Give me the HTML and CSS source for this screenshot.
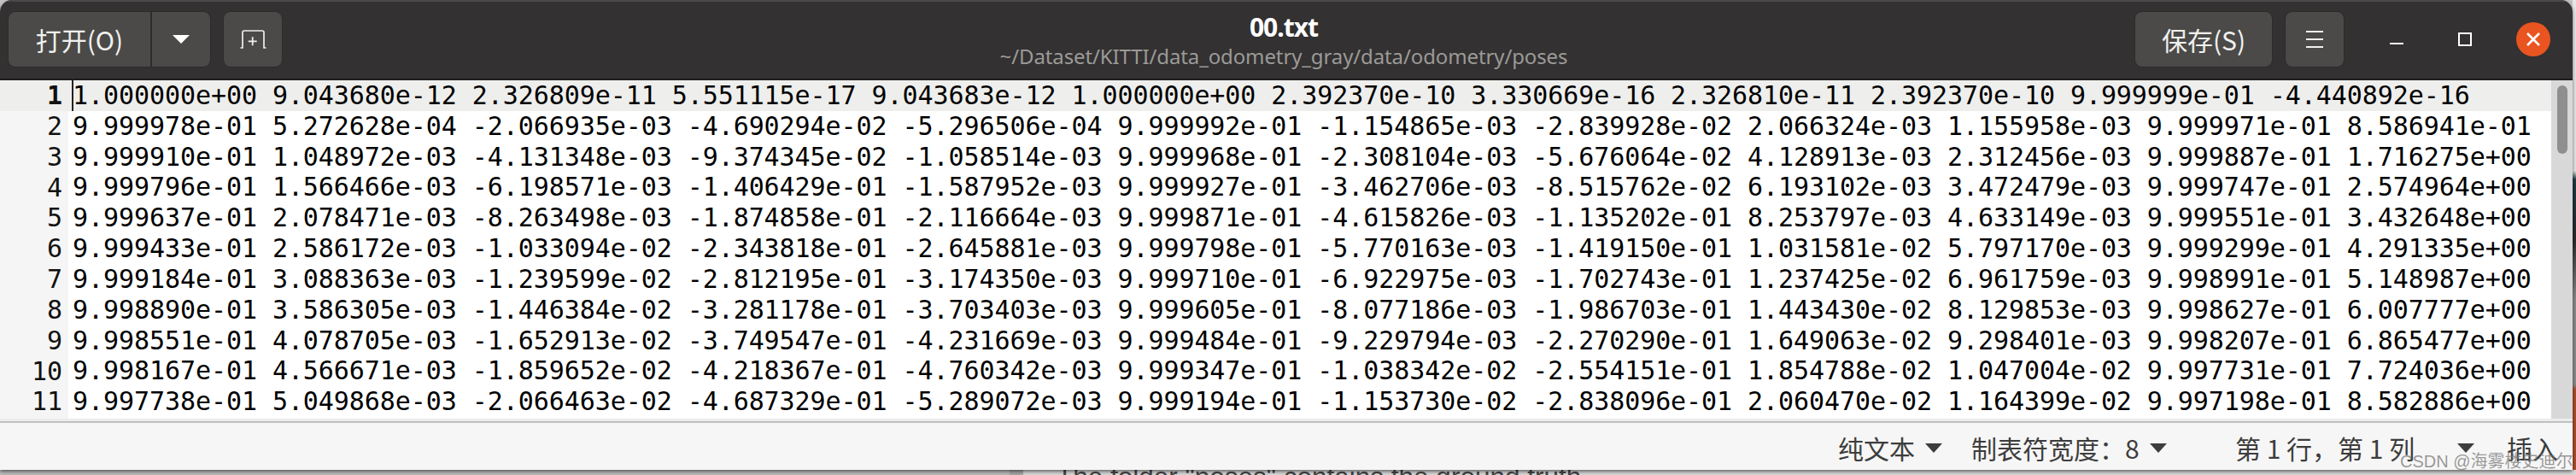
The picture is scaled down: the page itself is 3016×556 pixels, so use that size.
FILE: index.html
```html
<!DOCTYPE html>
<html lang="zh">
<head>
<meta charset="utf-8">
<title>00.txt</title>
<link rel="stylesheet" href="styles.css">
</head>
<body>
<div class="backdrop"><span class="backdrop-text">The folder "poses" contains the ground truth.</span></div>
<div class="edge"></div>
<div class="window">
  <header class="titlebar">
    <div class="group-left">
      <div class="split">
        <button class="btn btn-open">打开(O)</button>
        <button class="btn btn-drop"><svg width="20" height="10" viewBox="0 0 20 10"><path d="M0 0h20L10 10z" fill="#fff"/></svg></button>
      </div>
      <button class="btn btn-new"><svg width="34" height="26" viewBox="0 0 34 26"><path d="M2.500 23H5V5Q5 3 7 3H28Q30 3 30 5V23H32.500" fill="none" stroke="#eeeeec" stroke-width="1.700"/><path d="M11.700 15.300h10M16.700 10.300v10" stroke="#eeeeec" stroke-width="1.800"/></svg></button>
    </div>
    <div class="titles">
      <div class="title">00.txt</div>
      <div class="subtitle">~/Dataset/KITTI/data_odometry_gray/data/odometry/poses</div>
    </div>
    <div class="group-right">
      <button class="btn btn-save">保存(S)</button>
      <button class="btn btn-menu"><svg width="20" height="20" viewBox="0 0 20 20"><path d="M0 1h20M0 10h20M0 19h20" stroke="#eeeeec" stroke-width="2"/></svg></button>
      <div class="wm">
        <span class="wm-slot"><svg width="16" height="16" viewBox="0 0 16 16"><path d="M0 13h16" stroke="#fff" stroke-width="2"/></svg></span>
        <span class="wm-slot"><svg width="16" height="16" viewBox="0 0 16 16"><rect x="1" y="1" width="14" height="14" fill="none" stroke="#fff" stroke-width="2"/></svg></span>
        <span class="close"><svg width="18" height="18" viewBox="0 0 18 18"><path d="M2 2l14 14M16 2L2 16" stroke="#fff" stroke-width="2.600"/></svg></span>
      </div>
    </div>
  </header>
  <main class="editor">
    <div class="gutter">
      <div class="ln current">1</div><div class="ln">2</div><div class="ln">3</div><div class="ln">4</div><div class="ln">5</div><div class="ln">6</div><div class="ln">7</div><div class="ln">8</div><div class="ln">9</div><div class="ln">10</div><div class="ln">11</div>
    </div>
    <div class="text">
      <div class="line current"><span class="caret"></span>1.000000e+00 9.043680e-12 2.326809e-11 5.551115e-17 9.043683e-12 1.000000e+00 2.392370e-10 3.330669e-16 2.326810e-11 2.392370e-10 9.999999e-01 -4.440892e-16</div>
      <div class="line">9.999978e-01 5.272628e-04 -2.066935e-03 -4.690294e-02 -5.296506e-04 9.999992e-01 -1.154865e-03 -2.839928e-02 2.066324e-03 1.155958e-03 9.999971e-01 8.586941e-01</div>
      <div class="line">9.999910e-01 1.048972e-03 -4.131348e-03 -9.374345e-02 -1.058514e-03 9.999968e-01 -2.308104e-03 -5.676064e-02 4.128913e-03 2.312456e-03 9.999887e-01 1.716275e+00</div>
      <div class="line">9.999796e-01 1.566466e-03 -6.198571e-03 -1.406429e-01 -1.587952e-03 9.999927e-01 -3.462706e-03 -8.515762e-02 6.193102e-03 3.472479e-03 9.999747e-01 2.574964e+00</div>
      <div class="line">9.999637e-01 2.078471e-03 -8.263498e-03 -1.874858e-01 -2.116664e-03 9.999871e-01 -4.615826e-03 -1.135202e-01 8.253797e-03 4.633149e-03 9.999551e-01 3.432648e+00</div>
      <div class="line">9.999433e-01 2.586172e-03 -1.033094e-02 -2.343818e-01 -2.645881e-03 9.999798e-01 -5.770163e-03 -1.419150e-01 1.031581e-02 5.797170e-03 9.999299e-01 4.291335e+00</div>
      <div class="line">9.999184e-01 3.088363e-03 -1.239599e-02 -2.812195e-01 -3.174350e-03 9.999710e-01 -6.922975e-03 -1.702743e-01 1.237425e-02 6.961759e-03 9.998991e-01 5.148987e+00</div>
      <div class="line">9.998890e-01 3.586305e-03 -1.446384e-02 -3.281178e-01 -3.703403e-03 9.999605e-01 -8.077186e-03 -1.986703e-01 1.443430e-02 8.129853e-03 9.998627e-01 6.007777e+00</div>
      <div class="line">9.998551e-01 4.078705e-03 -1.652913e-02 -3.749547e-01 -4.231669e-03 9.999484e-01 -9.229794e-03 -2.270290e-01 1.649063e-02 9.298401e-03 9.998207e-01 6.865477e+00</div>
      <div class="line">9.998167e-01 4.566671e-03 -1.859652e-02 -4.218367e-01 -4.760342e-03 9.999347e-01 -1.038342e-02 -2.554151e-01 1.854788e-02 1.047004e-02 9.997731e-01 7.724036e+00</div>
      <div class="line">9.997738e-01 5.049868e-03 -2.066463e-02 -4.687329e-01 -5.289072e-03 9.999194e-01 -1.153730e-02 -2.838096e-01 2.060470e-02 1.164399e-02 9.997198e-01 8.582886e+00</div>
    </div>
    <div class="scrollbar"><div class="thumb"></div></div>
  </main>
  <footer class="statusbar">
    <span class="st st-lang">纯文本<i class="arrow"></i></span>
    <span class="st st-tab">制表符宽度：8<i class="arrow"></i></span>
    <span class="st st-pos">第 1 行，第 1 列<i class="arrow arrow-far"></i></span>
    <span class="st st-ins">插入</span>
  </footer>
</div>
<div class="watermark">CSDN @海雾楼史迪尔</div>
</body>
</html>
```
FILE: styles.css
```css
* { box-sizing: border-box; }
html, body { margin: 0; height: 556px; width: 3016px; overflow: hidden; }
body { background: #c4c4c4; position: relative; font-family: "Noto Sans", "Noto Sans CJK SC", sans-serif; }
.backdrop { position: absolute; left: 0; right: 0; bottom: 0; height: 6px; overflow: hidden; background: linear-gradient(90deg, #bcbcbc 0, #bcbcbc 1182px, #a6a6a6 1182px, #a6a6a6 1198px, #d8d8d8 1198px, #d8d8d8 100%); }
.backdrop-text { position: absolute; left: 1237px; top: -10px; font: 31.500px/36px "Liberation Sans", sans-serif; color: #444; white-space: nowrap; }
.edge { position: absolute; right: 0; top: 0; width: 4px; height: 550px; background: linear-gradient(180deg, #e6e6e6 0, #e6e6e6 200px, #1f3a44 210px, #2a2a2a 280px, #8a8a8a 350px, #8a8a8a 450px, #a84e2c 456px, #a84e2c 100%); }
.window { position: absolute; left: 0; top: 0; width: 3012px; height: 550px; display: flex; flex-direction: column; border-radius: 14px 14px 0 0; overflow: hidden; box-shadow: 0 2px 4px rgba(0,0,0,.55); background: #f6f6f6; }
.titlebar { height: 94px; flex: none; background: #333131; border-top: 2px solid #4a4848; border-bottom: 2px solid #1e1e1e; display: flex; align-items: center; justify-content: space-between; position: relative; padding: 0 26px 2px 10px; }
.group-left, .group-right, .split, .wm { display: flex; align-items: center; }
.group-left { gap: 16px; }
.group-right { gap: 16px; }
.btn { height: 64px; border: 0; background: #4b4a48; color: #f0f0ee; border-radius: 8px; padding: 0; font: 30px "Noto Sans CJK SC", sans-serif; display: flex; align-items: center; justify-content: center; box-shadow: 0 0 0 1px #2d2c2c; }
.btn-open { width: 166px; border-radius: 8px 0 0 8px; }
.btn-drop { width: 68px; margin-left: 2px; border-radius: 0 8px 8px 0; }
.btn-new { width: 68px; }
.btn-save { width: 160px; }
.btn-menu { width: 68px; }
.titles { position: absolute; left: 0; right: 6px; top: 13px; display: flex; flex-direction: column; align-items: center; pointer-events: none; }
.title { font-size: 30px; font-weight: 700; color: #fff; line-height: 34px; letter-spacing: -1px; }
.subtitle { font-size: 24px; letter-spacing: -.12px; color: #9b9a98; line-height: 32px; margin-top: 1px; }
.wm { gap: 0; margin-left: 6px; }
.wm-slot { width: 80px; display: flex; justify-content: center; }
.close { width: 40px; height: 40px; border-radius: 50%; background: #e95420; display: flex; align-items: center; justify-content: center; margin-left: 20px; }
.editor { height: 399px; flex: none; display: flex; background: #fff; position: relative; font: 30px/35.84px "DejaVu Sans Mono", monospace; letter-spacing: -.07px; color: #000; overflow: hidden; border-bottom: 3px solid #ececec; }
.gutter { width: 80px; flex: none; background: #f5f5f5; text-align: right; padding-right: 7px; color: #111; }
.ln.current { font-weight: 700; background: #eeeeec; margin-right: -7px; padding-right: 7px; }
.text { flex: 1; min-width: 0; }
.line { padding-left: 5px; height: 35.84px; position: relative; white-space: pre; }
.line.current { background: #eeeeec; }
.caret { position: absolute; left: 4px; top: 0; width: 2px; height: 36px; background: #222; }
.scrollbar { width: 25px; flex: none; background: #d8d8d8; padding: 6px 6px 0 7px; }
.thumb { width: 12px; height: 80px; background: #8f8f8f; border-radius: 6px; }
.statusbar { flex: 1; background: #f6f6f6; border-top: 2px solid #c0c0c0; display: flex; align-items: center; font: 30px "Noto Sans CJK SC", sans-serif; color: #3d3d3d; position: relative; }
.st { position: absolute; top: 7px; display: flex; align-items: center; white-space: nowrap; }
.st-lang { left: 2152px; }
.st-tab { left: 2308px; }
.st-pos { left: 2617px; }
.st-ins { left: 2935px; }
.arrow { width: 0; height: 0; margin-left: 12px; border-left: 10px solid transparent; border-right: 10px solid transparent; border-top: 11px solid #3d3d3d; }
.arrow-far { margin-left: 50px; }
.watermark { position: absolute; left: 2810px; top: 524px; font: 20px "Liberation Sans", "Noto Sans CJK SC", sans-serif; color: rgba(120,120,120,.75); white-space: nowrap; }
```
